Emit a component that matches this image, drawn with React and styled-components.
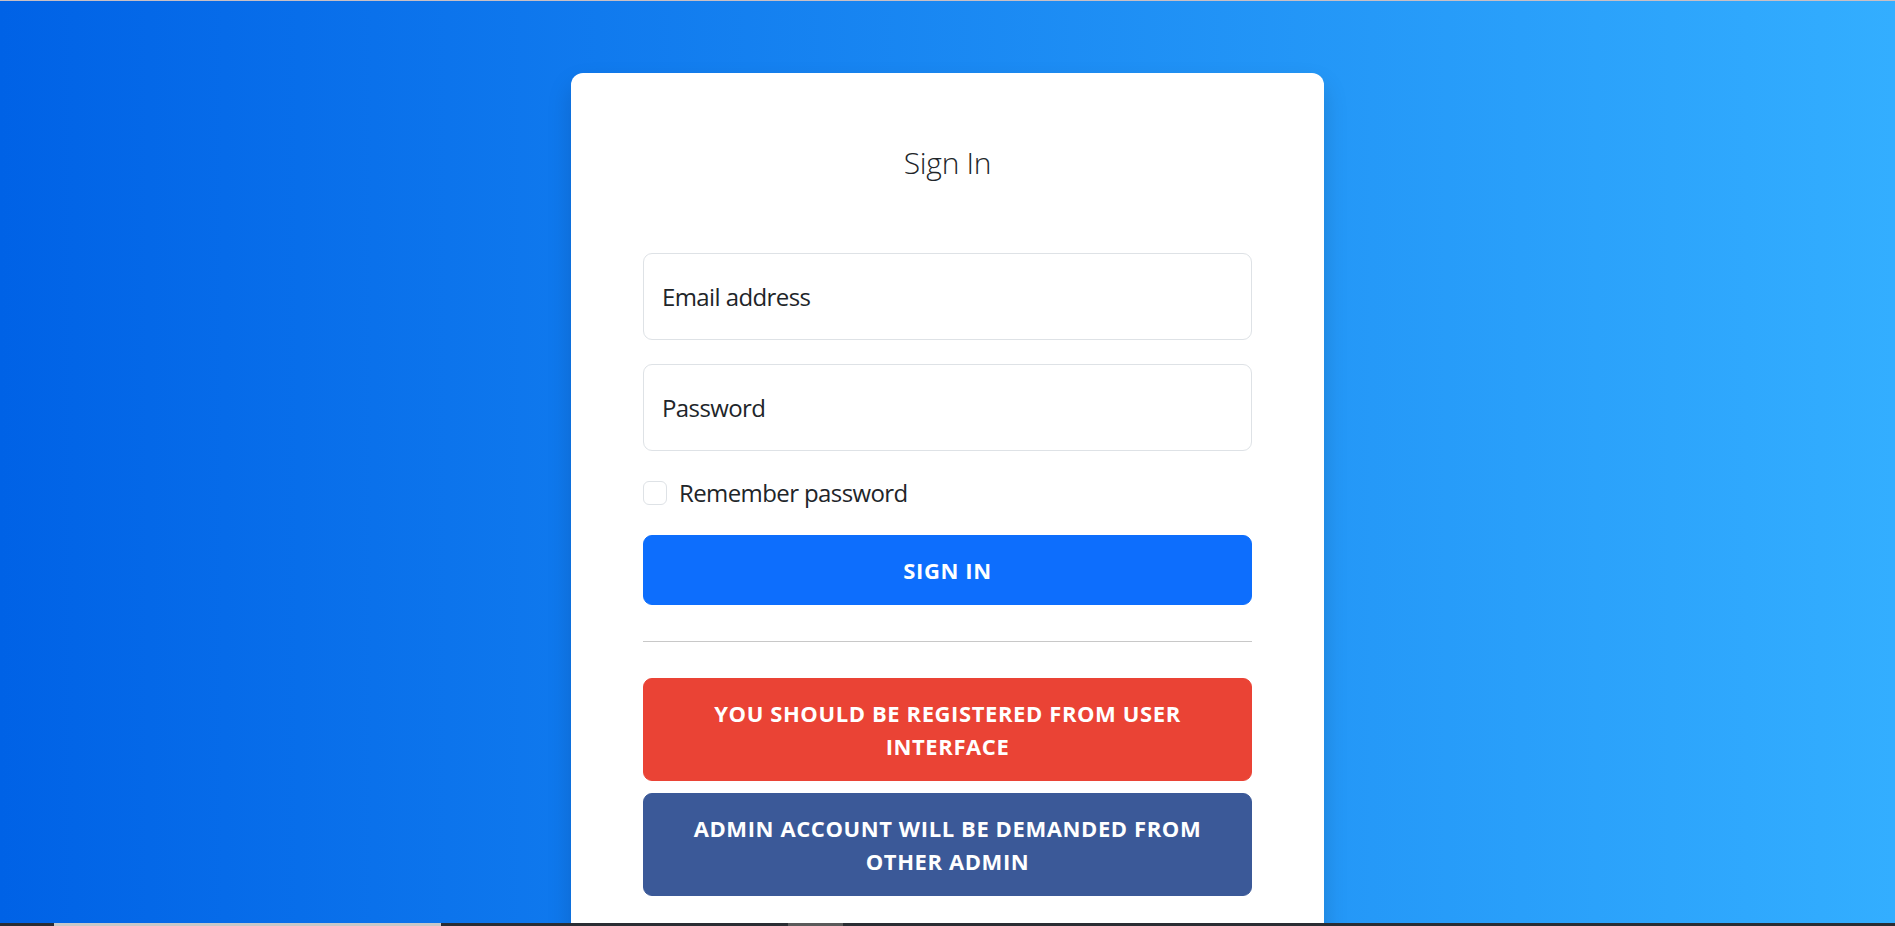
import React from "react";
import styled, { createGlobalStyle } from "styled-components";

const GlobalStyle = createGlobalStyle`
  html, body {
    margin: 0;
    padding: 0;
    overflow: hidden;
  }
  body {
    font-family: "Segoe UI", "Open Sans", "Noto Sans", sans-serif;
    color: #212529;
  }
  * {
    box-sizing: border-box;
  }
`;

const Page = styled.div`
  min-height: 100vh;
  background: linear-gradient(to right, #0062e6, #33aeff);
  border-top: 1px solid #c9bfc4;
  display: flex;
  justify-content: center;
  align-items: flex-start;
  padding-top: 72px;
`;

const Card = styled.div`
  width: 753px;
  background: #fff;
  border-radius: 12px;
  box-shadow: 0 12px 24px rgba(0, 0, 0, 0.15);
  padding: 72px;
`;

const Title = styled.h5`
  margin: 0 0 72px;
  font-size: 30px;
  line-height: 36px;
  font-weight: 300;
  letter-spacing: -0.3px;
  text-align: center;
  color: #212529;
`;

const Form = styled.form`
  display: flex;
  flex-direction: column;
`;

const Field = styled.input`
  display: block;
  width: 100%;
  height: 87px;
  margin-bottom: 24px;
  padding: 0 18px;
  font-family: inherit;
  font-size: 24px;
  letter-spacing: -0.6px;
  color: #212529;
  background: #fff;
  border: 1px solid #dee2e6;
  border-radius: 9px;
  outline: none;
  &::placeholder {
    color: #212529;
    opacity: 1;
  }
`;

const CheckRow = styled.label`
  display: flex;
  align-items: center;
  gap: 12px;
  min-height: 36px;
  margin-bottom: 24px;
  font-size: 24px;
  line-height: 36px;
  letter-spacing: -0.6px;
  color: #212529;
`;

const Box = styled.input`
  appearance: none;
  width: 24px;
  height: 24px;
  margin: 0;
  border: 1px solid #dee2e6;
  border-radius: 6px;
  background: #fff;
  flex-shrink: 0;
`;

const Button = styled.button`
  display: block;
  width: 100%;
  padding: 18px 24px;
  border: 1px solid ${(p) => p.$bg};
  border-radius: 9px;
  background: ${(p) => p.$bg};
  color: #fff;
  font-family: inherit;
  font-size: 22px;
  line-height: 32.4px;
  font-weight: 700;
  letter-spacing: 0.6px;
  text-transform: uppercase;
  text-align: center;
  margin-bottom: ${(p) => p.$mb || 0}px;
  cursor: pointer;
`;

const Rule = styled.hr`
  margin: 36px 0;
  border: 0;
  border-top: 1px solid #c8c8c8;
`;

const ScrollStrip = styled.div`
  position: fixed;
  left: 0;
  right: 0;
  bottom: 0;
  height: 3px;
  background: #2a2d33;
`;

const Thumb = styled.div`
  position: absolute;
  top: 0;
  bottom: 0;
  left: ${(p) => p.$left}px;
  width: ${(p) => p.$width}px;
  background: ${(p) => p.$color};
`;

export default function App() {
  return (
    <>
      <GlobalStyle />
      <Page>
        <Card>
          <Title>Sign In</Title>
          <Form onSubmit={(e) => e.preventDefault()}>
            <Field type="email" placeholder="Email address" />
            <Field type="password" placeholder="Password" />
            <CheckRow>
              <Box type="checkbox" />
              Remember password
            </CheckRow>
            <Button type="submit" $bg="#0d6efd">Sign in</Button>
            <Rule />
            <Button type="button" $bg="#ea4335" $mb={12}>
              You should be registered from user interface
            </Button>
            <Button type="button" $bg="#3b5998">
              Admin account will be demanded from other admin
            </Button>
          </Form>
        </Card>
      </Page>
      <ScrollStrip>
        <Thumb $left={54} $width={387} $color="#c8c8c8" />
        <Thumb $left={788} $width={55} $color="#5a5a5a" />
      </ScrollStrip>
    </>
  );
}
